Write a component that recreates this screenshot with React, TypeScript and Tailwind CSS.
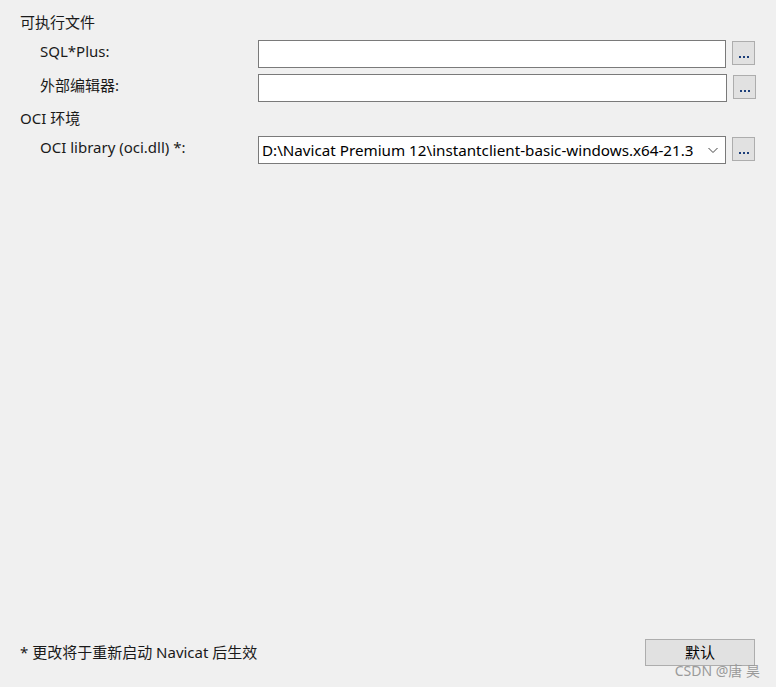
const font = {
  fontFamily: '"Noto Sans", "Noto Sans CJK SC", sans-serif',
};

const BrowseButton = ({ className = "" }: { className?: string }) => (
  <button
    type="button"
    className={`flex h-6 w-[23px] shrink-0 items-end justify-center border border-[#adadad] bg-[#e1e1e1] pb-[6px] ${className}`}
  >
    <span className="flex gap-[2px]">
      <span className="h-[2px] w-[2px] bg-[#1c3f7a]" />
      <span className="h-[2px] w-[2px] bg-[#1c3f7a]" />
      <span className="h-[2px] w-[2px] bg-[#1c3f7a]" />
    </span>
  </button>
);

const FieldRow = ({
  label,
  value = "",
  combo = false,
  wide = false,
}: {
  label: string;
  value?: string;
  combo?: boolean;
  wide?: boolean;
}) => (
  <div className="flex h-[28px] items-start">
    <div className="w-[238px] pl-5 pt-[1px] text-[15px] leading-5 text-[#1a1a1a]">{label}</div>
    <div
      className={`flex h-[28px] items-center overflow-hidden border border-[#7a7a7a] bg-white pl-[3px] pr-1 text-[15.2px] text-black ${
        wide ? "w-[469px]" : "w-[468px]"
      }`}
    >
      <span className="min-w-0 flex-1 overflow-hidden whitespace-nowrap">{value}</span>
      {combo && (
        <svg width="12" height="12" viewBox="0 0 12 12" className="ml-2 mr-[2px] shrink-0">
          <path d="M1.5 4 L6 8.5 L10.5 4" fill="none" stroke="#444" strokeWidth="1" />
        </svg>
      )}
    </div>
    <BrowseButton className="ml-[6px] mt-[1px]" />
  </div>
);

export default function App() {
  return (
    <div
      className="relative flex h-[687px] w-[776px] flex-col bg-[#f0f0f0] pl-5 text-black"
      style={font}
    >
      <div className="mt-3 flex h-5 items-center text-[15px] text-[#1a1a1a]">可执行文件</div>
      <div className="mt-2">
        <FieldRow label="SQL*Plus:" />
      </div>
      <div className="mt-[6px]">
        <FieldRow label="外部编辑器:" wide />
      </div>
      <div className="mt-[6px] flex h-5 items-center text-[15px] text-[#1a1a1a]">OCI 环境</div>
      <div className="mt-2">
        <FieldRow
          label="OCI library (oci.dll) *:"
          value="D:\Navicat Premium 12\instantclient-basic-windows.x64-21.3"
          combo
        />
      </div>

      <div className="mt-auto mb-[21px] flex items-center pr-[21px]">
        <div className="flex-1 text-[15px] text-[#1a1a1a]">* 更改将于重新启动 Navicat 后生效</div>
        <button
          type="button"
          className="h-[27px] w-[110px] border border-[#adadad] bg-[#e1e1e1] text-[15px] text-black"
        >
          默认
        </button>
      </div>

      <div className="absolute bottom-[9px] right-[16px] text-[14px] leading-none text-[#9a9a9a]">
        CSDN @唐 昊
      </div>
    </div>
  );
}
